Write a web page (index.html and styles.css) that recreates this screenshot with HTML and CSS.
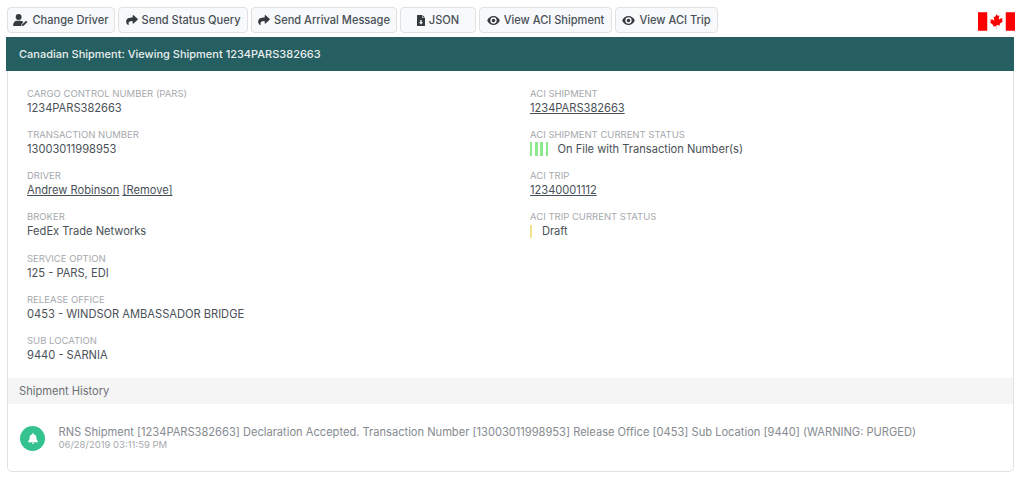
FILE: index.html
```html
<!DOCTYPE html>
<html lang="en">
<head>
<meta charset="utf-8">
<title>Canadian Shipment</title>
<link rel="stylesheet" href="styles.css">
</head>
<body>
<div class="toolbar">
  <button class="btn"><svg class="ico ico-user" viewBox="0 0 16 13"><circle cx="6" cy="3.2" r="3.2"/><path d="M0 12.2c0-3 2-4.900 4-4.900h4c1.200 0 2.200.5 3 1.400L9.200 11l-.4 2H.8c-.5 0-.8-.3-.8-.8z"/><path d="M10 11.200l4-4 1.500 1.500-4 4-1.900.4z"/></svg>Change Driver</button>
  <button class="btn"><svg class="ico ico-share" viewBox="0 0 14 12"><path d="M13.700 4.600L8.900.2C8.400-.2 7.800.1 7.800.7v2.400C3.400 3.200 0 4.100 0 8.200c0 1.700 1.100 3.100 2.300 3.800.4.200.8-.1.700-.5C2.400 8.200 3.800 7.400 7.800 7.300v2.400c0 .6.600.9 1.100.5l4.800-4.400c.4-.3.400-.9 0-1.200z"/></svg>Send Status Query</button>
  <button class="btn"><svg class="ico ico-share" viewBox="0 0 14 12"><path d="M13.700 4.600L8.900.2C8.400-.2 7.800.1 7.800.7v2.400C3.400 3.200 0 4.100 0 8.200c0 1.700 1.100 3.100 2.300 3.800.4.200.8-.1.700-.5C2.400 8.200 3.800 7.400 7.800 7.300v2.400c0 .6.600.9 1.100.5l4.800-4.400c.4-.3.400-.9 0-1.200z"/></svg>Send Arrival Message</button>
  <button class="btn"><svg class="ico ico-file" viewBox="0 0 8 11"><path fill-rule="evenodd" d="M0 .6C0 .3.300 0 .6 0H5v3h3v7.400c0 .3-.3.6-.6.6H.6c-.3 0-.6-.3-.6-.6zM3.300 5v2.200H2L4 9.400l2-2.200H4.700V5zM5.500 0L8 2.500H5.500z"/></svg>JSON</button>
  <button class="btn"><svg class="ico ico-eye" viewBox="0 0 14 10"><path fill-rule="evenodd" d="M7 0c3 0 5.700 1.800 7 5-1.300 3.200-4 5-7 5S1.300 8.200 0 5c1.300-3.200 4-5 7-5zm0 1.500a3.500 3.500 0 100 7 3.500 3.500 0 000-7zM7 3a2 2 0 110 4 2 2 0 010-4z"/></svg>View ACI Shipment</button>
  <button class="btn"><svg class="ico ico-eye" viewBox="0 0 14 10"><path fill-rule="evenodd" d="M7 0c3 0 5.700 1.800 7 5-1.300 3.200-4 5-7 5S1.300 8.200 0 5c1.300-3.200 4-5 7-5zm0 1.500a3.500 3.500 0 100 7 3.500 3.500 0 000-7zM7 3a2 2 0 110 4 2 2 0 010-4z"/></svg>View ACI Trip</button>
  <svg class="flag" viewBox="0 0 36 18"><rect width="36" height="18" fill="#fff"/><rect width="9" height="18" fill="#f00"/><rect x="27" width="9" height="18" fill="#f00"/><path fill="#f00" d="M18 2l-1.300 2.400c-.2.300-.4.300-.7.100l-.9-.5.700 3.600c.1.500-.3.700-.6.300l-1.100-1.200-.2.700-1.900-.4.500 1.900c.1.300 0 .5-.2.600l-.7.300 3.200 2.600c.2.200.2.400.1.600l-.3.900 3.100-.4c.2 0 .3.100.3.300L17.800 16h.4l-.2-3.300c0-.2.100-.3.300-.3l3.100.4-.3-.9c-.1-.2-.1-.4.100-.6l3.200-2.600-.7-.3c-.2-.1-.3-.3-.2-.6l.5-1.900-1.900.4-.2-.7-1.100 1.200c-.3.400-.7.200-.6-.3l.7-3.600-.9.500c-.3.200-.5.200-.7-.1z"/></svg>
</div>
<main class="card">
  <header class="card-head">Canadian Shipment: Viewing Shipment 1234PARS382663</header>
  <section class="details">
    <div class="col">
      <div class="field"><div class="label">CARGO CONTROL NUMBER (PARS)</div><div class="value">1234PARS382663</div></div>
      <div class="field"><div class="label">TRANSACTION NUMBER</div><div class="value">13003011998953</div></div>
      <div class="field"><div class="label">DRIVER</div><div class="value"><a href="#">Andrew Robinson</a> <a href="#">[Remove]</a></div></div>
      <div class="field"><div class="label">BROKER</div><div class="value">FedEx Trade Networks</div></div>
      <div class="field"><div class="label">SERVICE OPTION</div><div class="value">125 - PARS, EDI</div></div>
      <div class="field"><div class="label">RELEASE OFFICE</div><div class="value">0453 - WINDSOR AMBASSADOR BRIDGE</div></div>
      <div class="field"><div class="label">SUB LOCATION</div><div class="value">9440 - SARNIA</div></div>
    </div>
    <div class="col">
      <div class="field"><div class="label">ACI SHIPMENT</div><div class="value"><a href="#">1234PARS382663</a></div></div>
      <div class="field"><div class="label">ACI SHIPMENT CURRENT STATUS</div><div class="value status"><span class="bars"><i class="bar bar-green"></i><i class="bar bar-green"></i><i class="bar bar-green"></i><i class="bar bar-green"></i></span>On File with Transaction Number(s)</div></div>
      <div class="field"><div class="label">ACI TRIP</div><div class="value"><a href="#">12340001112</a></div></div>
      <div class="field"><div class="label">ACI TRIP CURRENT STATUS</div><div class="value status"><span class="bars"><i class="bar bar-yellow"></i></span>Draft</div></div>
    </div>
  </section>
  <div class="history-head">Shipment History</div>
  <section class="history">
    <span class="bell"><svg viewBox="0 0 12 13"><path d="M6 0c-.5 0-.8.4-.8.8v.5C3.400 1.700 2 3.200 2 5.100c0 2.900-1 3.800-1.700 4.600-.2.200-.3.400-.3.600 0 .4.300.8.800.8h10.400c.5 0 .8-.4.800-.8 0-.2-.1-.4-.3-.6C11 8.900 10 8 10 5.100c0-1.900-1.400-3.400-3.200-3.800v-.5C6.800.4 6.500 0 6 0zM4.500 11.700a1.500 1.300 0 003 0z"/></svg></span>
    <div class="entry">
      <div class="entry-text">RNS Shipment [1234PARS382663] Declaration Accepted. Transaction Number [13003011998953] Release Office [0453] Sub Location [9440] (WARNING: PURGED)</div>
      <div class="entry-time">06/28/2019 03:11:59 PM</div>
    </div>
  </section>
</main>
</body>
</html>
```
FILE: styles.css
```css
* { box-sizing: border-box; }
html, body { margin: 0; padding: 0; background: #fff; }
body {
  width: 1020px;
  height: 479px;
  overflow: hidden;
  font-family: Inter, "Liberation Sans", sans-serif;
  font-size: 11px;
  color: #495057;
  padding: 7px 5px 0 7px;
}
.toolbar { display: flex; gap: 3px; height: 26px; }
.btn {
  display: inline-flex;
  align-items: center;
  justify-content: center;
  height: 26px;
  padding: 0;
  border: 1px solid #dfe1e3;
  border-radius: 4px;
  background: #f8f9fa;
  color: #495057;
  font: 500 11.05px Inter, "Liberation Sans", sans-serif;
  white-space: nowrap;
}
.btn:nth-child(1) { width: 108px; }
.btn:nth-child(2) { width: 130px; }
.btn:nth-child(3) { width: 146px; }
.btn:nth-child(4) { width: 76px; }
.btn:nth-child(5) { width: 133px; }
.btn:nth-child(6) { width: 103px; }
.ico { fill: #343a40; margin-right: 4px; flex: none; }
.ico-user { width: 15px; height: 12px; }
.ico-share { width: 12px; height: 10px; }
.ico-file { width: 8px; height: 11px; }
.ico-eye { width: 13px; height: 9px; }
.flag { width: 37px; height: 19px; margin-left: auto; margin-top: 5px; }
.card {
  margin-top: 4px;
  width: 1007px;
  height: 435px;
  border: 1px solid #dee2e6;
  border-top: 0;
  border-radius: 0 0 5px 5px;
  display: flex;
  flex-direction: column;
}
.card-head {
  margin: 0 -1px 0 -2px;
  height: 34px;
  background: #255f61;
  color: #e9eeee;
  font-size: 11px;
  font-weight: 500;
  line-height: 34px;
  padding-left: 13px;
}
.details { display: flex; padding: 16px 19px 0; height: 307px; }
.col { width: 503px; flex: none; }
.field { height: 41.15px; }
.label { color: #a6a9ad; font-size: 9.5px; line-height: 13px; }
.value { font-size: 11.12px; line-height: 16px; color: #495057; }
.value a { color: #495057; text-decoration: underline; }
.status { display: flex; align-items: center; }
.bars { display: inline-flex; gap: 2.8px; margin-right: 9.5px; }
.bar { width: 2.4px; height: 13.5px; display: block; }
.bar-green { background: #8ce98c; }
.bar-yellow { background: #f2e08c; }
.history-head {
  height: 26px;
  background: #f5f5f5;
  color: #6c7075;
  font-size: 11.12px;
  line-height: 26px;
  padding-left: 11px;
}
.history { display: flex; align-items: center; padding: 21px 12px 0; }
.bell {
  width: 25px; height: 25px; border-radius: 50%;
  background: #34c38f;
  display: flex; align-items: center; justify-content: center;
  margin-right: 13.5px; flex: none;
}
.bell svg { width: 10px; height: 11px; fill: #fff; }
.entry-text { color: #868a8f; font-size: 11.12px; line-height: 14px; }
.entry-time { color: #a6a9ad; font-size: 9.5px; line-height: 12px; }
```
